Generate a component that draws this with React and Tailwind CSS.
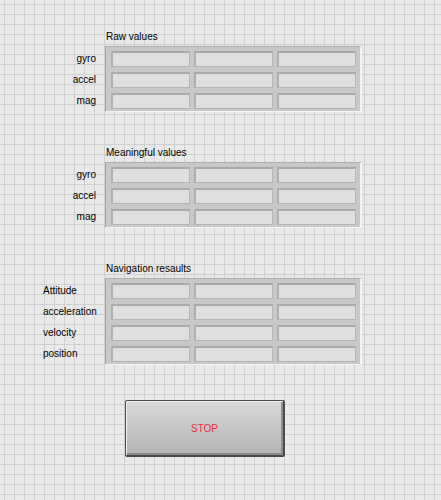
import React from "react";

const groups = [
  {
    id: 1,
    title: "Raw values",
    align: "right",
    rows: ["gyro", "accel", "mag"],
  },
  {
    id: 2,
    title: "Meaningful values",
    align: "right",
    rows: ["gyro", "accel", "mag"],
  },
  {
    id: 3,
    title: "Navigation resaults",
    align: "left",
    rows: ["Attitude", "acceleration", "velocity", "position"],
  },
];

const Cell = () => (
  <div className="w-[79px] h-[16px] bg-[#dfdfdf] border-t-2 border-l-2 border-t-[#a9a9a9] border-l-[#b0b0b0] border-b border-r border-b-[#b4b4b4] border-r-[#b8b8b8]" />
);

const ArrayGroup = ({ group }) => (
  <div className="flex flex-col">
    <div className="ml-[106px] h-[14px] leading-[14px] text-[10px] text-black">{group.title}</div>
    <div className="flex mt-[2px]">
      {/* row labels */}
      <div className="w-[105px] pt-[5px] flex flex-col gap-[5px]">
        {group.rows.map((r) => (
          <div
            key={r}
            className={`h-[16px] leading-[16px] text-[10px] text-black ${
              group.align === "right" ? "text-right pr-[9px]" : "pl-[43px]"
            }`}
          >
            {r}
          </div>
        ))}
      </div>
      {/* array frame */}
      <div className="bg-[#c8c8c8] border-l border-t border-l-[#a4a4a4] border-t-[#b0b0b0] border-r-2 border-b border-r-[#f4f4f4] border-b-[#f4f4f4] pt-[4px] pl-[5px] pr-[4px] pb-[2px] flex flex-col gap-[5px]">
        {group.rows.map((r) => (
          <div key={r} className="flex gap-[4px]">
            <Cell />
            <Cell />
            <Cell />
          </div>
        ))}
      </div>
    </div>
  </div>
);

export default function App() {
  return (
    <div
      className="w-[441px] h-[500px] overflow-hidden bg-[#e9e9e9] bg-[linear-gradient(to_right,#d0d0d0_1px,transparent_1px),linear-gradient(to_bottom,#d0d0d0_1px,transparent_1px)] bg-[size:10px_10px] bg-[position:4px_4px] pt-[30px]"
      style={{ fontFamily: '"Liberation Sans", Arial, sans-serif' }}
    >
      <div className="flex flex-col gap-[34px]">
        {groups.map((g) => (
          <ArrayGroup key={g.id} group={g} />
        ))}
      </div>

      <div className="ml-[125px] mt-[35px] w-[160px] h-[57px] rounded-[2px] border border-[#4a4a4a] border-r-2 border-b-2 bg-[linear-gradient(to_bottom,#dadada,#c4c4c4_55%,#b4b4b4)] shadow-[inset_1px_1px_0_#f2f2f2,inset_-2px_-2px_0_#8c8c8c] flex items-center justify-center">
        <span className="text-[10px] text-[#e0303a]">STOP</span>
      </div>
    </div>
  );
}
